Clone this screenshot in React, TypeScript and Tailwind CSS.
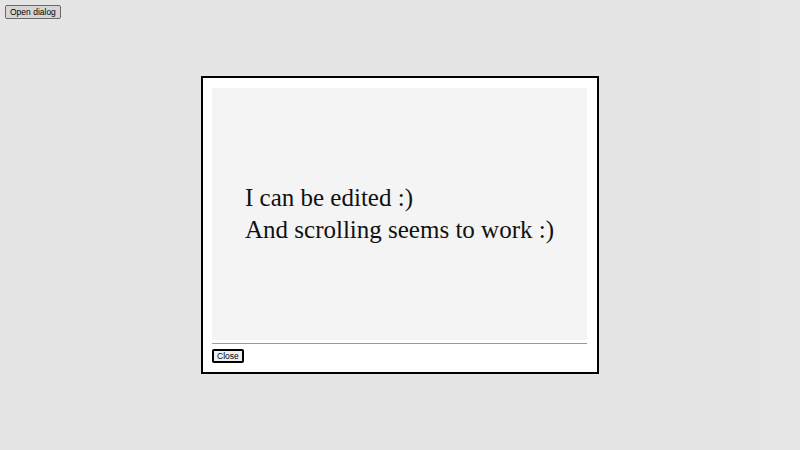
export default function App() {
    return (
        <div className="relative h-[450px] w-[800px] overflow-hidden bg-white font-['Liberation_Sans',Arial,sans-serif]">
            <div className="p-[5px]">
                <button className="block rounded-[2px] border border-[#767676] bg-[#efefef] px-[4px] py-px text-[8.5px] leading-[10px] text-black">
                    Open dialog
                </button>
            </div>

            {/* backdrop + dialog */}
            <div className="absolute inset-0 flex items-center justify-center bg-black/10">
                <div className="flex h-[298px] w-[398px] flex-col border-2 border-black bg-white pt-[10px] pr-[10px] pl-[9px]">
                    <div
                        contentEditable
                        suppressContentEditableWarning
                        className="flex h-[252px] items-center justify-center bg-[#f4f4f4] font-['Liberation_Serif','Times_New_Roman',serif] text-[25px] leading-[32px] text-[#111] outline-none"
                    >
                        <div>
                            <div>I can be edited :)</div>
                            <div>And scrolling seems to work :)</div>
                        </div>
                    </div>
                    <div className="mt-[3px] h-px bg-[#9a9a9a]" />
                    <div className="mt-[5px]">
                        <button className="block rounded-[2px] border-2 border-black bg-[#efefef] px-[3px] text-[8.5px] leading-[10px] text-black">
                            Close
                        </button>
                    </div>
                </div>
            </div>
        </div>
    );
}
